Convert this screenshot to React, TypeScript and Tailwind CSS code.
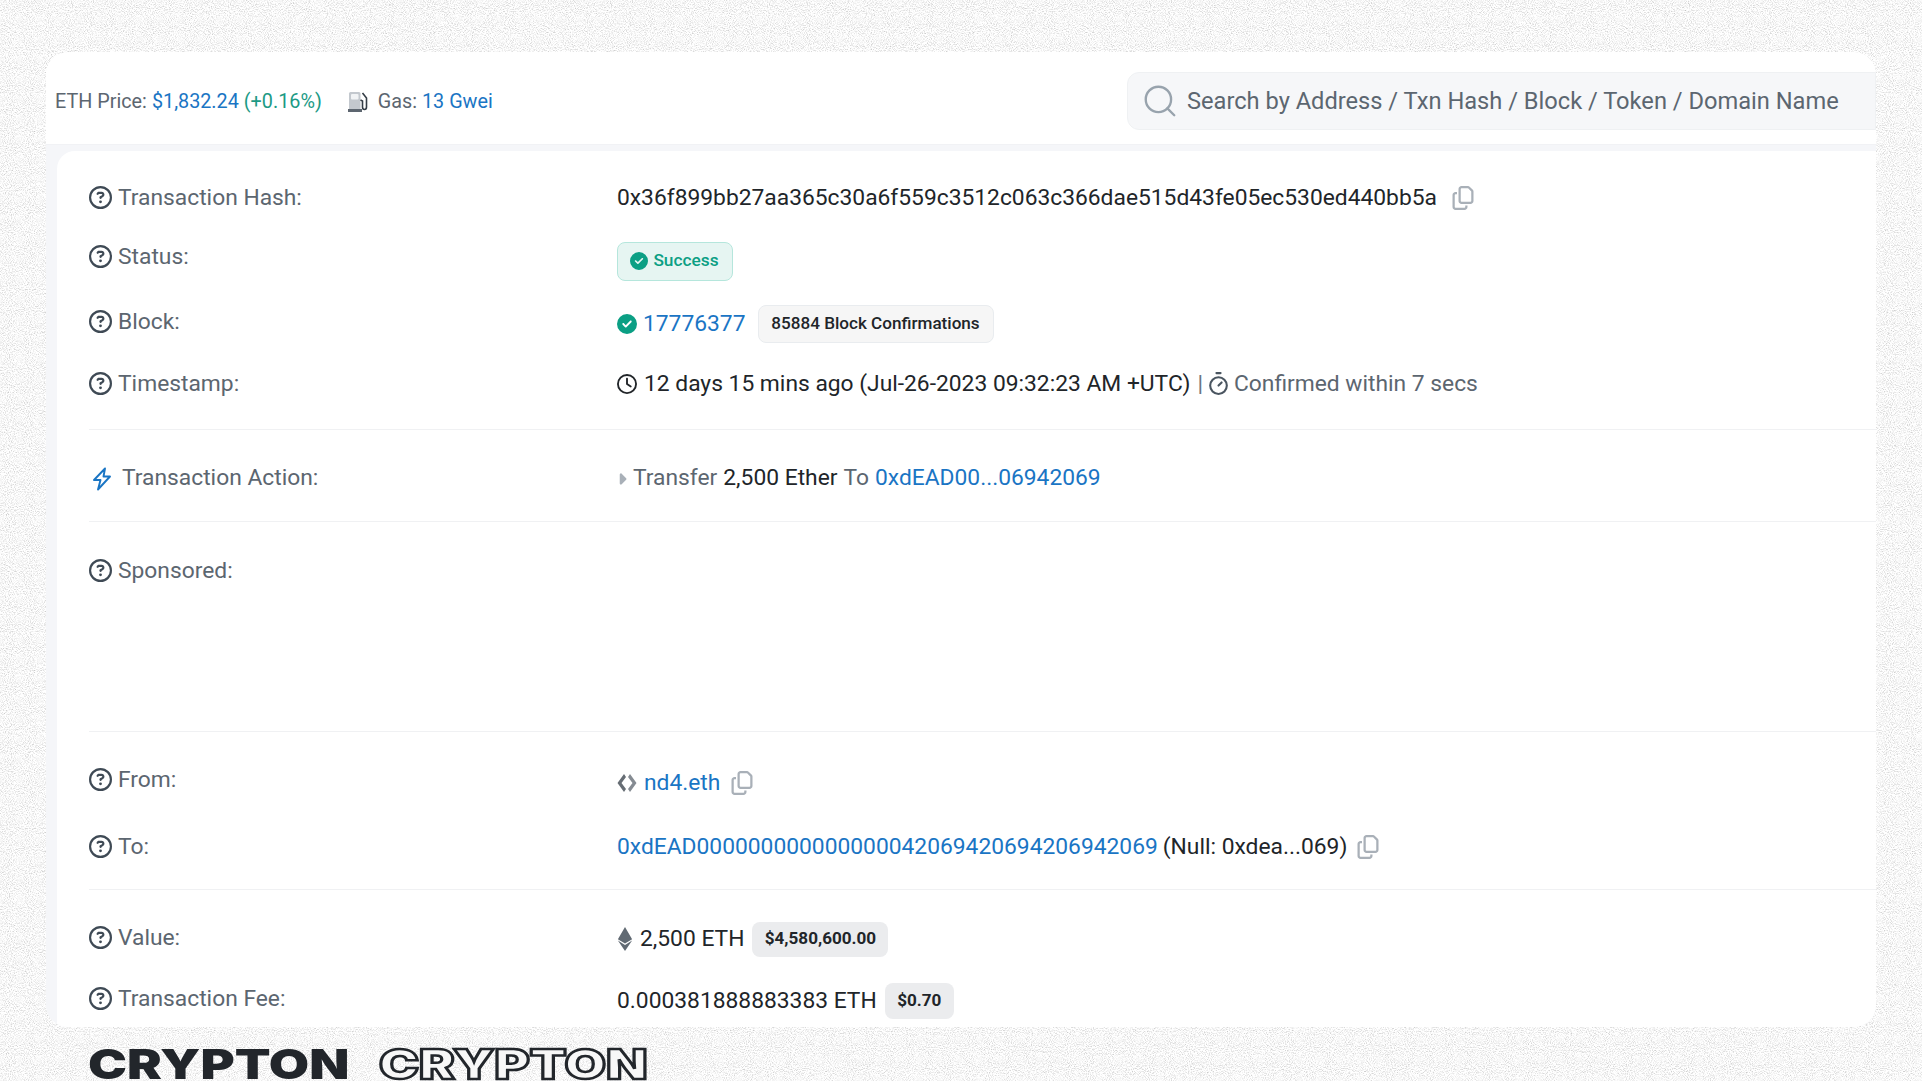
import React from "react";
import { FaRegCircleQuestion, FaRegCopy, FaRegClock, FaCircleCheck, FaEthereum, FaCaretRight } from "react-icons/fa6";
import { Search, Timer } from "lucide-react";

const Help = () => <FaRegCircleQuestion className="w-[23px] h-[23px] shrink-0 text-[#3f4a55] mt-[-2px]" />;

const Copy = () => <FaRegCopy className="w-[24px] h-[24px] text-[#a9b0b8]" />;

const Label = ({ children, shift = "" }: { children: React.ReactNode; shift?: string }) => (
  <div className={`w-[528px] shrink-0 flex items-center gap-[6px] text-[#5c6670] ${shift}`}>
    <Help />
    <span>{children}</span>
  </div>
);

const Divider = () => <div className="h-px bg-[#f0f1f3]" />;

const Link = ({ children }: { children: React.ReactNode }) => <span className="text-[#1a75c4]">{children}</span>;

const GasIcon = () => (
  <svg width="22" height="22" viewBox="0 0 22 22" className="shrink-0">
    <path d="M2 2.5 Q2 1 3.5 1 H12 Q13.5 1 13.5 2.5 V18 H2 Z" fill="#c3c8ce" />
    <rect x="4" y="3" width="7.5" height="5.5" rx="1" fill="#f1f3f5" />
    <rect x="1" y="18" width="14" height="3" fill="#5d6670" />
    <path d="M15.5 2 L19.5 7 V16 Q19.5 18.5 17.5 18.5 Q15.5 18.5 15.5 16 V10 L13.5 9" fill="none" stroke="#343d46" strokeWidth="1.6" />
  </svg>
);

const EnsIcon = () => (
  <svg width="20" height="20" viewBox="0 0 20 20" className="shrink-0">
    <path d="M7 1 L0.5 10 L7 19 L9 16 L4.5 10 L9 4 Z" fill="#666d74" />
    <path d="M13 1 L19.5 10 L13 19 L11 16 L15.5 10 L11 4 Z" fill="#858b92" />
  </svg>
);

const BoltIcon = () => (
  <svg width="22" height="24" viewBox="0 0 22 24" className="shrink-0">
    <path d="M14 1.5 L3 13 H9.5 L7 22.5 L19 9.5 H12.5 Z" fill="none" stroke="#1a75c4" strokeWidth="1.9" strokeLinejoin="round" />
  </svg>
);

const Noise = () => (
  <svg className="absolute inset-0 w-full h-full" aria-hidden="true">
    <filter id="paper" x="0" y="0" width="100%" height="100%">
      <feTurbulence type="fractalNoise" baseFrequency="0.95" numOctaves="2" seed="7" />
      <feColorMatrix type="matrix" values="0.9 0 0 0 0.485  0.9 0 0 0 0.485  0.9 0 0 0 0.485  0 0 0 0 1" />
    </filter>
    <rect width="100%" height="100%" filter="url(#paper)" />
  </svg>
);

export default function App() {
  return (
    <div className="relative w-[1922px] h-[1081px] overflow-hidden bg-[#eeeeee] font-['Roboto',sans-serif]">
      <Noise />
      <div className="relative flex flex-col pt-[52px] pl-[46px]">
        <div className="w-[1830px] h-[975px] rounded-[22px] bg-white overflow-hidden flex flex-col">
          <header className="h-[92px] shrink-0 flex items-center pl-[9px] pt-[6px] text-[19.8px] text-[#5c6670]">
            <div className="flex items-center pt-[1px]">
              <span>ETH Price: </span>
              <span className="ml-[5px] text-[#1a75c4]">$1,832.24</span>
              <span className="ml-[5px] text-[#1c9a85]">(+0.16%)</span>
              <span className="ml-[25px]"><GasIcon /></span>
              <span className="ml-[9px]">Gas: </span>
              <span className="ml-[5px] text-[#1a75c4]">13 Gwei</span>
            </div>
            <div className="ml-auto w-[749px] h-[58px] flex items-center bg-[#f6f7f9] border border-[#eff1f3] rounded-l-[12px] pl-[13px]">
              <Search className="w-[38px] h-[38px] text-[#98a3ad]" strokeWidth={1.5} />
              <span className="ml-[8px] pt-[2px] text-[23.65px] text-[#5c6670] whitespace-nowrap">Search by Address / Txn Hash / Block / Token / Domain Name</span>
            </div>
          </header>
          <div className="flex-1 min-h-0 bg-[#f5f6f9] pl-[11px] pt-[6px] border-t border-[#f1f2f5]">
            <main className="h-full bg-white rounded-tl-[18px] pl-[32px] pt-[22px] text-[22.8px] text-[#212529] overflow-hidden">
              <div className="h-[50px] flex items-center">
                <Label>Transaction Hash:</Label>
                <span>0x36f899bb27aa365c30a6f559c3512c063c366dae515d43fe05ec530ed440bb5a</span>
                <span className="ml-[14px]"><Copy /></span>
              </div>
              <div className="h-[76px] flex items-center">
                <Label shift="pb-[8px]">Status:</Label>
                <span className="w-[116px] h-[39px] flex items-center justify-center gap-[5px] pr-[1px] rounded-[8px] bg-[#e6f5f2] border border-[#b5e6dc] text-[17.3px] font-medium text-[#0b9f84]">
                  <FaCircleCheck className="w-[18px] h-[18px]" />
                  Success
                </span>
              </div>
              <div className="h-[50px] flex items-center">
                <Label shift="pb-[4px]">Block:</Label>
                <FaCircleCheck className="w-[20px] h-[20px] text-[#0b9f84] mr-[6px]" />
                <Link>17776377</Link>
                <span className="ml-[12px] w-[236px] h-[38px] flex items-center justify-center rounded-[8px] bg-[#f6f6f6] border border-[#e9ecef] text-[17.1px] font-medium">85884 Block Confirmations</span>
              </div>
              <div className="h-[70px] flex items-center">
                <Label>Timestamp:</Label>
                <FaRegClock className="w-[20px] h-[20px] mr-[7px]" />
                <span>12 days 15 mins ago (Jul-26-2023 09:32:23 AM +UTC)</span>
                <span className="ml-[7px] text-[#6c757d]">|</span>
                <Timer className="w-[25px] h-[25px] ml-[3px] mr-[3px] mt-[-2px] text-[#4a5560]" strokeWidth={2} />
                <span className="text-[#5c6670]">Confirmed within 7 secs</span>
              </div>
              <div className="mt-[10px]"><Divider /></div>
              <div className="h-[91px] pt-[6px] flex items-center">
                <div className="w-[528px] shrink-0 flex items-center gap-[9px] text-[#5c6670] pl-[2px]">
                  <BoltIcon />
                  <span>Transaction Action:</span>
                </div>
                <FaCaretRight className="w-[18px] h-[18px] ml-[-4px] mr-[2px] text-[#a9b0b8]" />
                <span className="text-[#5c6670]">Transfer</span>
                <span className="ml-[6px]">2,500 Ether</span>
                <span className="ml-[6px] text-[#5c6670]">To</span>
                <span className="ml-[6px] text-[#1a75c4]">0xdEAD00...06942069</span>
              </div>
              <Divider />
              <div className="h-[209px] pt-[32px]">
                <Label>Sponsored:</Label>
              </div>
              <Divider />
              <div className="mt-[19px] h-[64px] flex items-center">
                <Label shift="pb-[6px]">From:</Label>
                <EnsIcon />
                <span className="ml-[7px] text-[#1a75c4]">nd4.eth</span>
                <span className="ml-[10px]"><Copy /></span>
              </div>
              <div className="h-[64px] flex items-center">
                <Label>To:</Label>
                <span className="text-[#1a75c4]">0xdEAD000000000000000042069420694206942069</span>
                <span className="ml-[5px]">(Null: 0xdea...069)</span>
                <span className="ml-[9px]"><Copy /></span>
              </div>
              <div className="mt-[10px]"><Divider /></div>
              <div className="mt-[18px] h-[62px] flex items-center">
                <Label shift="pb-[2px]">Value:</Label>
                <FaEthereum className="w-[16px] h-[24px] text-[#616a73] mr-[7px]" />
                <span>2,500 ETH</span>
                <span className="ml-[8px] w-[136px] h-[35px] flex items-center justify-center rounded-[8px] bg-[#ebecee] text-[17.1px] font-bold">$4,580,600.00</span>
              </div>
              <div className="h-[62px] flex items-center">
                <Label shift="pb-[3px]">Transaction Fee:</Label>
                <span>0.000381888883383 ETH</span>
                <span className="ml-[8px] w-[69px] h-[36px] flex items-center justify-center rounded-[8px] bg-[#ebecee] text-[17.1px] font-bold">$0.70</span>
              </div>
            </main>
          </div>
        </div>
        <div className="mt-[20px] flex items-center h-[34px] pl-[42px] text-[41px] leading-[34px] font-['Inter',sans-serif] font-black text-[#22262b]">
          <span className="w-[291px] origin-left scale-x-[1.272]">CRYPTON</span>
          <span className="origin-left scale-x-[1.306] text-[#f7f7f7] [-webkit-text-stroke:2.5px_#22262b]">CRYPTON</span>
        </div>
      </div>
    </div>
  );
}
